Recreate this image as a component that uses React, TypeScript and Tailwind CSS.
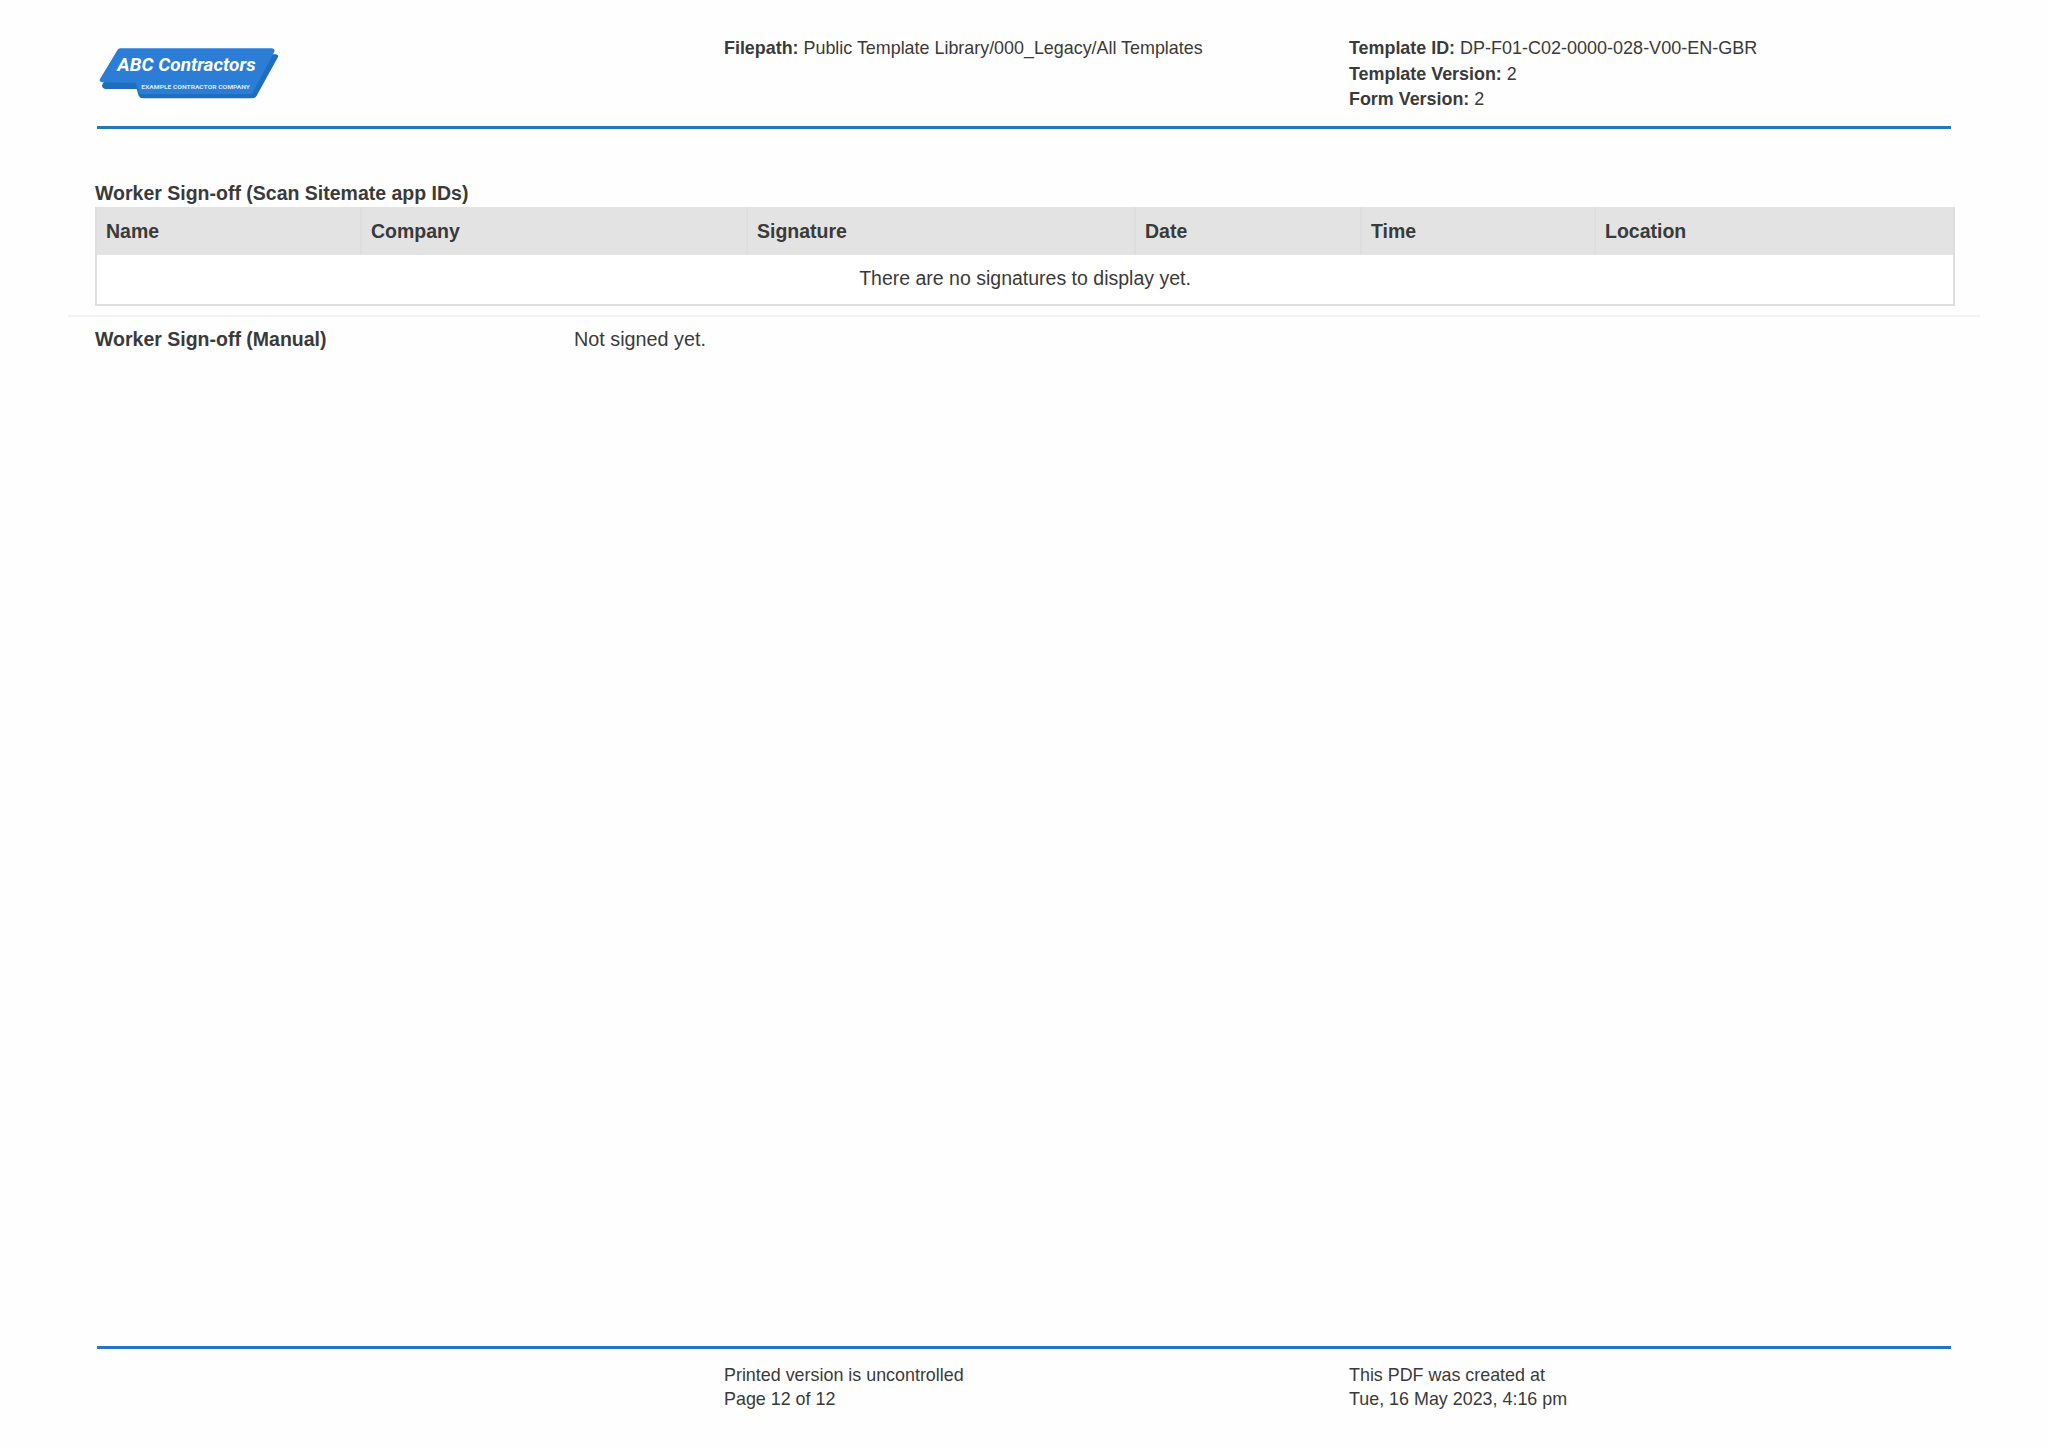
const headers = [
  { label: 'Name', width: 'w-[265px]' },
  { label: 'Company', width: 'w-[386px]' },
  { label: 'Signature', width: 'w-[388px]' },
  { label: 'Date', width: 'w-[226px]' },
  { label: 'Time', width: 'w-[234px]' },
  { label: 'Location', width: 'w-[359px]' },
];

function Logo() {
  return (
    <svg viewBox="57 50 540 156" className="ml-[2px] mt-[47px] h-[52px] w-[180px]">
      <path d="M120 66 L588 72 Q597 74 594 80 L530 196 Q526 204 515 204 L190 204 Q180 204 176 196 L170 176 L76 176 Q66 174 66 165 Z" fill="#1f6dbd" />
      <path d="M112 60 Q114 54 122 54 L576 54 Q586 56 583 64 L520 184 Q516 192 506 192 L186 192 Q178 192 176 186 L168 158 L66 156 Q56 154 60 146 Z" fill="#2b7dd6" />
      <text x="112" y="122" textLength="415" lengthAdjust="spacingAndGlyphs" fill="#fff" fontSize="56" fontWeight="700" fontStyle="italic" fontFamily="Roboto, sans-serif">
        ABC Contractors
      </text>
      <text x="184" y="175" textLength="326" lengthAdjust="spacingAndGlyphs" fill="#dbe9f8" fontSize="16" fontWeight="700" fontFamily="Roboto, sans-serif">
        EXAMPLE CONTRACTOR COMPANY
      </text>
    </svg>
  );
}

export default function App() {
  return (
    <div className="flex h-[1447px] w-[2048px] flex-col bg-[#fefefe] font-['Liberation_Sans',Arial,sans-serif] text-[17.9px] text-[#3a3a3a]">
      {/* page header */}
      <header className="mx-[97px] flex h-[129px] border-b-[3px] border-[#2277c0] pt-[36px]">
        <div className="-mt-[36px] w-[627px]">
          <Logo />
        </div>
        <div className="w-[625px] leading-[24px]">
          <b>Filepath:</b> Public Template Library/000_Legacy/All Templates
        </div>
        <div className="leading-[24px]">
          <div><b>Template ID:</b> <span className="text-[18px]">DP-F01-C02-0000-028-V00-EN-GBR</span></div>
          <div className="mt-[2px]"><b>Template Version:</b> 2</div>
          <div className="mt-[1px]"><b>Form Version:</b> 2</div>
        </div>
      </header>

      <main className="mx-[68px] mt-[51px] flex-1">
        <div className="px-[27px]">
          <h2 className="text-[19.5px] font-bold leading-[27px]">Worker Sign-off (Scan Sitemate app IDs)</h2>
          <table className="w-[1858px] table-fixed border-collapse">
            <thead>
              <tr className="h-[48px] bg-[#e3e3e3]">
                {headers.map((h) => (
                  <th key={h.label} className={`${h.width} border-x-2 border-[#dedede] pl-[9px] pt-[2px] text-left text-[19.5px] font-bold`}>
                    {h.label}
                  </th>
                ))}
              </tr>
            </thead>
            <tbody>
              <tr className="h-[50px]">
                <td colSpan={6} className="border-2 border-t-0 border-[#dedede] bg-white pb-[2px] text-center text-[19.5px]">
                  There are no signatures to display yet.
                </td>
              </tr>
            </tbody>
          </table>
        </div>
        <div className="mt-[9px] flex border-t-2 border-[#f3f3f3] px-[27px] pt-[9px] text-[19.5px] leading-[26px]">
          <div className="w-[479px] font-bold">Worker Sign-off (Manual)</div>
          <div className="text-[19.8px]">Not signed yet.</div>
        </div>
      </main>

      {/* page footer */}
      <footer className="mx-[97px] mb-[36px] flex border-t-[3px] border-[#2277c0] pt-[14px] leading-[24px]">
        <div className="ml-[627px] w-[625px]">
          <div>Printed version is uncontrolled</div>
          <div>Page 12 of 12</div>
        </div>
        <div>
          <div>This PDF was created at</div>
          <div>Tue, 16 May 2023, 4:16 pm</div>
        </div>
      </footer>
    </div>
  );
}
